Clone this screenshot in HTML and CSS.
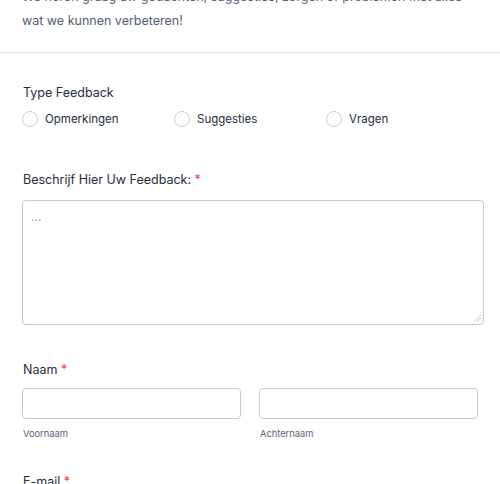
FILE: index.html
```html
<!DOCTYPE html>
<html lang="nl">
<head>
<meta charset="utf-8">
<title>Feedback</title>
<link rel="stylesheet" href="styles.css">
</head>
<body>
<div class="page">
  <header class="intro">
    <p class="intro-text">We horen graag uw gedachten, suggesties, zorgen of problemen met alles wat we kunnen verbeteren!</p>
  </header>
  <form class="form">
    <div class="field field-type">
      <div class="label">Type Feedback</div>
      <div class="radios">
        <label class="radio"><span class="circle"></span><span class="radio-text">Opmerkingen</span></label>
        <label class="radio"><span class="circle"></span><span class="radio-text">Suggesties</span></label>
        <label class="radio"><span class="circle"></span><span class="radio-text">Vragen</span></label>
      </div>
    </div>
    <div class="field field-desc">
      <div class="label">Beschrijf Hier Uw Feedback: <span class="req">*</span></div>
      <div class="textarea-wrap">
        <textarea class="textarea" placeholder="..."></textarea>
      </div>
    </div>
    <div class="field field-name">
      <div class="label">Naam <span class="req">*</span></div>
      <div class="name-row">
        <div class="name-col">
          <input class="input" type="text">
          <div class="sublabel">Voornaam</div>
        </div>
        <div class="name-col">
          <input class="input" type="text">
          <div class="sublabel">Achternaam</div>
        </div>
      </div>
    </div>
    <div class="field field-email">
      <div class="label">E-mail <span class="req">*</span></div>
    </div>
  </form>
</div>
</body>
</html>
```
FILE: styles.css
```css
html, body {
  margin: 0;
  padding: 0;
  background: #ffffff;
  overflow: hidden;
}
body {
  font-family: Inter, "Liberation Sans", sans-serif;
  color: #2c3345;
}
.page {
  width: 500px;
  height: 484px;
  overflow: hidden;
}
.intro {
  padding: 0 33px 19px 22px;
  border-bottom: 1px solid #e3e6ee;
}
.intro-text {
  margin: -15px 0 0;
  font-size: 12.5px;
  line-height: 24px;
  color: #515d77;
}
.form {
  padding: 30px 16px 0 22px;
}
.label {
  font-size: 12.5px;
  line-height: 20px;
  color: #262e40;
  padding-left: 1px;
}
.req {
  color: #f23a3c;
}
.radios {
  display: flex;
  margin-top: 6px;
  height: 20px;
}
.radio {
  width: 152px;
  display: flex;
  align-items: center;
  gap: 7px;
}
.circle {
  width: 14px;
  height: 14px;
  border: 1px solid #c8cedb;
  border-radius: 50%;
  flex: none;
}
.radio-text {
  font-size: 11.5px;
  color: #262e40;
}
.field-desc {
  margin-top: 41px;
}
.textarea-wrap {
  position: relative;
  width: 462px;
  margin-top: 10px;
}
.textarea-wrap::after {
  content: "";
  position: absolute;
  right: 3px;
  bottom: 3px;
  width: 7px;
  height: 7px;
  background:
    linear-gradient(135deg, transparent 45%, #c3cad8 45%, #c3cad8 55%, transparent 55%) no-repeat,
    linear-gradient(135deg, transparent 45%, #c3cad8 45%, #c3cad8 55%, transparent 55%) no-repeat;
  background-size: 7px 7px, 4px 4px;
  background-position: 0 0, 3px 3px;
  pointer-events: none;
}
.textarea {
  display: block;
  box-sizing: border-box;
  width: 462px;
  height: 125px;
  border: 1px solid #c3cad8;
  border-radius: 4px;
  padding: 8px 8px;
  font-family: Inter, "Liberation Sans", sans-serif;
  font-size: 12px;
  color: #2c3345;
  resize: none;
  outline: none;
}
.textarea::placeholder {
  color: #8894ab;
}
.field-name {
  margin-top: 35px;
}
.name-row {
  display: flex;
  gap: 18px;
  margin-top: 8px;
  width: 456px;
}
.name-col {
  flex: 1;
}
.input {
  display: block;
  box-sizing: border-box;
  width: 100%;
  height: 31px;
  border: 1px solid #c3cad8;
  border-radius: 4px;
  padding: 0 8px;
  outline: none;
}
.sublabel {
  margin-top: 8px;
  font-size: 9.3px;
  line-height: 14px;
  color: #57647e;
  padding-left: 1px;
}
.field-email {
  margin-top: 31px;
}
```
